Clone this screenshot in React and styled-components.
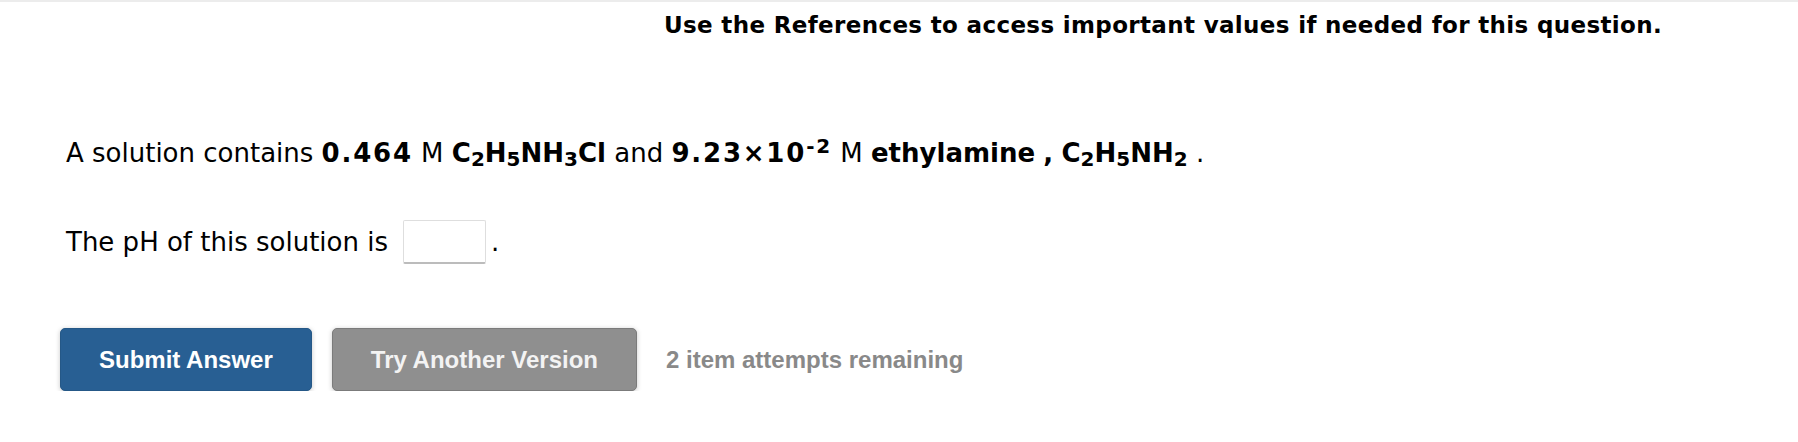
import React from 'react'
import styled, { createGlobalStyle } from 'styled-components'

const GlobalStyle = createGlobalStyle`
  html, body {
    margin: 0;
    padding: 0;
    background: #fff;
  }
  body {
    font-family: "DejaVu Sans", Verdana, sans-serif;
    color: #000;
  }
`

const TopRule = styled.div`
  height: 2px;
  background: #ececec;
`

const ReferenceBar = styled.div`
  display: flex;
  justify-content: flex-end;
  padding: 10px 136px 0 0;
  font-size: 23px;
  line-height: 26px;
  letter-spacing: 0.35px;
  font-weight: bold;
`

const Question = styled.div`
  padding-left: 66px;
  font-size: 26px;
  line-height: 34px;
`

const Statement = styled.p`
  margin: 98px 0 0;
  white-space: nowrap;
`

// numbers are set a little looser than the rest of the bold text
const B = styled.b`
  font-weight: bold;
  letter-spacing: ${p => (p.$num ? '1.8px' : '0')};
`

const Sub = styled.sub`
  font-size: 20px;
  line-height: 0;
  vertical-align: -0.22em;
`

const Sup = styled.sup`
  font-size: 20px;
  line-height: 0;
  vertical-align: 0.45em;
`

const AnswerRow = styled.div`
  display: flex;
  align-items: center;
  margin-top: 50px;
  height: 44px;
`

const AnswerInput = styled.input`
  box-sizing: border-box;
  width: 83px;
  height: 44px;
  margin: 0 5px 0 15px;
  border: 1px solid #dedede;
  border-bottom: 2px solid #bcbcbc;
  border-radius: 2px;
  background: #fff;
  outline: none;
`

const Actions = styled.div`
  display: flex;
  align-items: center;
  gap: 20px;
  margin: 64px 0 0 60px;
  font-family: "Liberation Sans", Arial, sans-serif;
  font-weight: bold;
  font-size: 24px;
`

const Button = styled.button`
  box-sizing: border-box;
  height: 63px;
  padding: 0 38px;
  border-radius: 5px;
  border: 1px solid ${p => (p.$muted ? '#7b7b7b' : '#255887')};
  background: ${p => (p.$muted ? '#8f8f8f' : '#285f93')};
  color: ${p => (p.$muted ? '#f3f3f3' : '#fff')};
  font: inherit;
  box-shadow: 0 1px 5px rgba(0, 0, 0, 0.22);
  cursor: pointer;
`

const Attempts = styled.span`
  margin-left: 9px;
  color: #898989;
`

export default function App() {
  return (
    <>
      <GlobalStyle />
      <TopRule />
      <ReferenceBar>Use the References to access important values if needed for this question.</ReferenceBar>
      <Question>
        <Statement>
          A solution contains <B $num>0.464</B> M{' '}
          <B>C<Sub>2</Sub>H<Sub>5</Sub>NH<Sub>3</Sub>Cl</B> and{' '}
          <B $num>9.23×10<Sup>-2</Sup></B> M <B>ethylamine</B> <B>,</B>{' '}
          <B>C<Sub>2</Sub>H<Sub>5</Sub>NH<Sub>2</Sub></B> .
        </Statement>
        <AnswerRow>
          The pH of this solution is
          <AnswerInput type="text" aria-label="pH" />.
        </AnswerRow>
      </Question>
      <Actions>
        <Button>Submit Answer</Button>
        <Button $muted>Try Another Version</Button>
        <Attempts>2 item attempts remaining</Attempts>
      </Actions>
    </>
  )
}
